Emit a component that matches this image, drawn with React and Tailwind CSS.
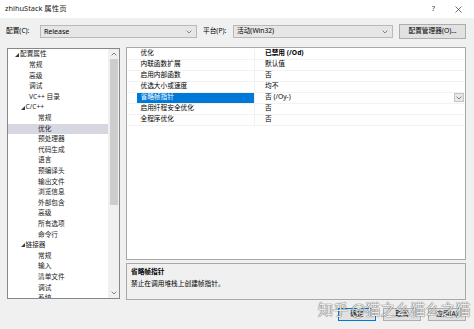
import React from "react";

function Chevron() {
  return (
    <svg width="6" height="4" viewBox="0 0 6 4" className="shrink-0">
      <path d="M0.6 0.6 L3 3 L5.4 0.6" fill="none" stroke="#6a6a6a" strokeWidth="0.8" />
    </svg>
  );
}

function ChevronUp() {
  return (
    <svg width="6" height="4" viewBox="0 0 6 4">
      <path d="M0.6 3.4 L3 1 L5.4 3.4" fill="none" stroke="#606060" strokeWidth="0.8" />
    </svg>
  );
}

function Expander() {
  return (
    <svg width="4" height="4" viewBox="0 0 4 4" className="shrink-0">
      <path d="M4 0 L4 4 L0 4 Z" fill="#3a3a3a" />
    </svg>
  );
}

const tree = [
  { t: "配置属性", c: "pl-[7px]", e: true },
  { t: "常规", c: "pl-[21px]" },
  { t: "高级", c: "pl-[21px]" },
  { t: "调试", c: "pl-[21px]" },
  { t: "VC++ 目录", c: "pl-[21px]" },
  { t: "C/C++", c: "pl-[12.5px]", e: true },
  { t: "常规", c: "pl-[30px]" },
  { t: "优化", c: "pl-[30px]", s: true },
  { t: "预处理器", c: "pl-[30px]" },
  { t: "代码生成", c: "pl-[30px]" },
  { t: "语言", c: "pl-[30px]" },
  { t: "预编译头", c: "pl-[30px]" },
  { t: "输出文件", c: "pl-[30px]" },
  { t: "浏览信息", c: "pl-[30px]" },
  { t: "外部包含", c: "pl-[30px]" },
  { t: "高级", c: "pl-[30px]" },
  { t: "所有选项", c: "pl-[30px]" },
  { t: "命令行", c: "pl-[30px]" },
  { t: "链接器", c: "pl-[12.5px]", e: true },
  { t: "常规", c: "pl-[30px]" },
  { t: "输入", c: "pl-[30px]" },
  { t: "清单文件", c: "pl-[30px]" },
  { t: "调试", c: "pl-[30px]" },
  { t: "系统", c: "pl-[30px]" },
];

const props = [
  { n: "优化", v: "已禁用 (/Od)", b: true },
  { n: "内联函数扩展", v: "默认值" },
  { n: "启用内部函数", v: "否" },
  { n: "优选大小或速度", v: "均不" },
  { n: "省略帧指针", v: "否 (/Oy-)", s: true },
  { n: "启用纤程安全优化", v: "否" },
  { n: "全程序优化", v: "否" },
];

export default function App() {
  return (
    <div className="w-[474px] h-[329px] bg-[#f0f0f0] relative overflow-hidden flex flex-col text-black font-['Noto_Sans','Noto_Sans_CJK_SC',sans-serif] leading-none">
      {/* title bar */}
      <div className="h-[18px] bg-white flex items-center pl-[5px] pr-[12px]">
        <span className="text-[7.4px] text-[#1a1a1a]">zhihuStack 属性页</span>
        <div className="ml-auto flex items-center gap-[20px]">
          <span className="text-[7.5px] text-[#333]">?</span>
          <svg width="7" height="7" viewBox="0 0 7 7">
            <path d="M0.5 0.5 L6.5 6.5 M6.5 0.5 L0.5 6.5" stroke="#333" strokeWidth="0.7" />
          </svg>
        </div>
      </div>

      {/* toolbar */}
      <div className="mt-[6px] h-[15px] flex items-center pl-[6px] text-[6.7px]">
        <span className="w-[34px]">配置(C):</span>
        <div className="w-[157px] h-[13px] bg-[#e6e6e6] border border-[#b9b9b9] flex items-center pl-[3px] pr-[4px]">
          <span className="flex-1 text-[7px]">Release</span>
          <Chevron />
        </div>
        <span className="ml-[6px] w-[30px]">平台(P):</span>
        <div className="w-[160px] h-[13px] bg-[#e6e6e6] border border-[#b9b9b9] flex items-center pl-[3px] pr-[4px]">
          <span className="flex-1">活动(Win32)</span>
          <Chevron />
        </div>
        <div className="ml-[6px] w-[67px] h-[15px] bg-[#e1e1e1] border border-[#adadad] flex items-center justify-center">
          配置管理器(O)...
        </div>
      </div>

      {/* main */}
      <div className="mt-[8px] h-[253px] flex pl-[7px] pr-[8px] gap-[6px] text-[6.7px]">
        {/* tree */}
        <div className="mt-[1px] w-[113px] h-[251px] bg-white border border-[#828790] flex overflow-hidden">
          <div className="flex-1 pt-[0.5px] overflow-hidden text-[#222]">
            {tree.map((it, i) => (
              <div
                key={i}
                className={`h-[10.6px] flex items-center gap-[1px] ${it.c} ${it.s ? "bg-[#d6d7e1]" : ""}`}
              >
                {it.e && <Expander />}
                <span className="whitespace-nowrap">{it.t}</span>
              </div>
            ))}
          </div>
          <div className="w-[11px] bg-[#f0f0f0] flex flex-col items-center">
            <div className="h-[10px] flex items-center justify-center">
              <ChevronUp />
            </div>
            <div className="w-[8px] h-[146px] bg-[#cdcdcd]" />
            <div className="flex-1" />
            <div className="h-[10px] flex items-center justify-center">
              <Chevron />
            </div>
          </div>
        </div>

        {/* right column */}
        <div className="flex-1 flex flex-col gap-[3px]">
          <div className="h-[213px] bg-white border border-[#a8a8a8] pt-[0.5px] overflow-hidden">
            {props.map((p, i) => (
              <div key={i} className="h-[11px] flex border-b border-[#f2f2f2]">
                <div className="w-[10px]" />
                <div
                  className={`w-[118px] pl-[3.5px] flex items-center border-r border-[#f0f0f0] ${
                    p.s ? "bg-[#0078d7] text-white" : ""
                  }`}
                >
                  {p.n}
                </div>
                <div className="flex-1 pl-[10px] pr-[1px] flex items-center">
                  <span className={`flex-1 ${p.b ? "font-bold" : ""}`}>{p.v}</span>
                  {p.s && (
                    <div className="w-[10px] h-[9px] bg-[#e8e8e8] border border-[#c4c4c4] flex items-center justify-center">
                      <Chevron />
                    </div>
                  )}
                </div>
              </div>
            ))}
          </div>
          <div className="h-[37px] border border-[#a8a8a8] bg-[#f0f0f0] pl-[4px] pt-[5px] flex flex-col gap-[5px]">
            <span className="font-bold">省略帧指针</span>
            <span>禁止在调用堆栈上创建帧指针。</span>
          </div>
        </div>
      </div>

      {/* buttons */}
      <div className="mt-[8px] h-[13px] flex justify-end gap-[7px] pr-[8px] text-[6.7px]">
        <div className="w-[38px] h-[13px] bg-[#e1e1e1] border border-[#0078d7] flex items-center justify-center">
          确定
        </div>
        <div className="w-[38px] h-[13px] bg-[#e1e1e1] border border-[#adadad] flex items-center justify-center">
          取消
        </div>
        <div className="w-[38px] h-[13px] bg-[#e1e1e1] border border-[#adadad] flex items-center justify-center">
          应用(A)
        </div>
      </div>

      {/* watermark */}
      <div className="absolute left-[318px] top-[301px] text-[15px] leading-none whitespace-nowrap text-white/90 font-['Noto_Sans_CJK_SC',sans-serif] [text-shadow:0_0_1px_rgba(0,0,0,0.7),0_0_1px_rgba(0,0,0,0.5)]">
        知乎 @猫之么猫么之猫
      </div>
    </div>
  );
}
